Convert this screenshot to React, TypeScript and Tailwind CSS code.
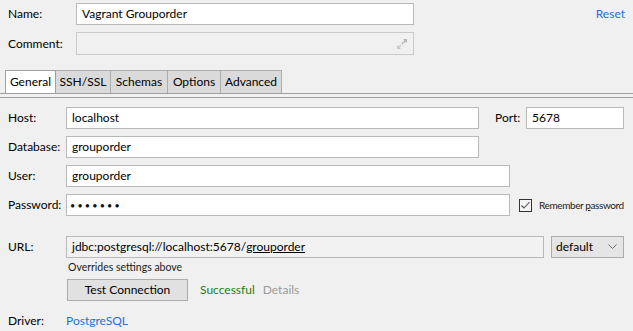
import React from "react";

const Field = ({ w, children, className = "" }: { w: string; children?: React.ReactNode; className?: string }) => (
  <div className={`${w} shrink-0 h-[22px] border border-[#b9b9b9] bg-white flex items-center px-[5px] text-[12px] text-black whitespace-nowrap ${className}`}>
    {children}
  </div>
);

export default function App() {
  return (
    <div
      className="w-[633px] h-[331px] bg-[#f0f0f0] overflow-hidden text-[12px] text-black leading-none whitespace-nowrap"
      style={{ fontFamily: 'Lato, "Noto Sans", sans-serif' }}
    >
      {/* Name */}
      <div className="flex items-center pt-[3px] pr-2">
        <div className="w-[76px] pl-2 shrink-0">Name:</div>
        <Field w="w-[338px]">Vagrant Grouporder</Field>
        <div className="flex-1" />
        <div className="text-[#2470d8]">Reset</div>
      </div>
      {/* Comment */}
      <div className="flex items-center mt-[7px]">
        <div className="w-[76px] pl-2 shrink-0">Comment:</div>
        <div className="w-[338px] shrink-0 h-[23px] border border-[#cacaca] bg-[#f0f0f0] flex items-center justify-end pr-[5px]">
          <svg width="12" height="12" viewBox="0 0 12 12">
            <path d="M7 1 H11 V5 Z" fill="#b4b4b4" />
            <path d="M6 6 L10 2" stroke="#b4b4b4" strokeWidth="1.4" />
            <path d="M1 7 V11 H5 Z" fill="#c8c8c8" />
            <path d="M2 10 L5 7" stroke="#c8c8c8" strokeWidth="1.4" />
          </svg>
        </div>
      </div>
      {/* Tabs */}
      <div className="mt-[15px] flex pl-[5px] border-b border-[#a0a0a0] h-[24px]">
        <div className="w-[51px] h-[23px] flex items-center justify-center bg-white border-l border-t border-r border-[#a0a0a0]">General</div>
        <div className="w-[55px] h-[23px] flex items-center justify-center bg-[#dadada] border-t border-r border-[#acacac]">SSH/SSL</div>
        <div className="w-[57px] h-[23px] flex items-center justify-center bg-[#dadada] border-t border-r border-[#acacac]">Schemas</div>
        <div className="w-[53px] h-[23px] flex items-center justify-center bg-[#dadada] border-t border-r border-[#acacac]">Options</div>
        <div className="w-[61px] h-[23px] flex items-center justify-center bg-[#dadada] border-t border-r border-[#acacac]">Advanced</div>
      </div>
      <div className="mt-[3px] border-t border-[#a0a0a0]" />

      {/* Form */}
      <div className="mt-[9px] flex flex-col gap-[7px]">
        <div className="flex items-center">
          <div className="w-[66px] pl-2 shrink-0">Host:</div>
          <Field w="w-[413px]">localhost</Field>
          <div className="ml-[16px] w-[31px] shrink-0">Port:</div>
          <Field w="w-[98px]">5678</Field>
        </div>
        <div className="flex items-center">
          <div className="w-[66px] pl-2 shrink-0">Database:</div>
          <Field w="w-[413px]">grouporder</Field>
        </div>
        <div className="flex items-center">
          <div className="w-[66px] pl-2 shrink-0">User:</div>
          <Field w="w-[444px]">grouporder</Field>
        </div>
        <div className="flex items-center">
          <div className="w-[66px] pl-2 shrink-0">Password:</div>
          <Field w="w-[444px]" className="pl-[3px]">
            <span className="text-[9px] tracking-[2.2px] text-[#111]">•••••••</span>
          </Field>
          <div className="ml-[9px] shrink-0 w-[13px] h-[13px] border border-[#333333] bg-[#f4f4f4] flex items-center justify-center">
            <svg width="11" height="11" viewBox="0 0 11 11">
              <path d="M1.5 5.5 L4 8 L9.5 2" fill="none" stroke="#505050" strokeWidth="1.1" />
            </svg>
          </div>
          <div className="ml-[7px] text-[10px] tracking-[-0.4px] text-[#1a1a1a]">
            Remember <span className="underline">p</span>assword
          </div>
        </div>
      </div>

      {/* URL */}
      <div className="mt-[20px] flex items-center">
        <div className="w-[66px] pl-2 shrink-0">URL:</div>
        <div className="w-[478px] shrink-0 h-[22px] border border-[#b9b9b9] bg-[#f2f2f2] flex items-center px-[5px]">
          jdbc:postgresql://localhost:5678/<span className="underline">grouporder</span>
        </div>
        <div className="ml-[7px] shrink-0 w-[73px] h-[22px] border border-[#acacac] bg-[#e5e5e5] flex items-center justify-between pl-[4px] pr-[6px]">
          <span>default</span>
          <svg width="9" height="6" viewBox="0 0 9 6">
            <path d="M0.5 0.5 L4.5 4.5 L8.5 0.5" fill="none" stroke="#707070" strokeWidth="1" />
          </svg>
        </div>
      </div>
      <div className="pl-[68px] mt-[4px] text-[10.5px] text-[#1a1a1a]">Overrides settings above</div>
      <div className="mt-[6px] flex items-center pl-[67px]">
        <div className="w-[121px] h-[22px] border border-[#adadad] bg-[#e1e1e1] flex items-center justify-center">Test Connection</div>
        <div className="ml-[12px] text-[#1e7a1e]">Successful</div>
        <div className="ml-[8px] text-[#9a9a9a]">Details</div>
      </div>
      <div className="mt-[14px] flex items-center">
        <div className="w-[66px] pl-2 shrink-0">Driver:</div>
        <div className="text-[#2470d8]">PostgreSQL</div>
      </div>
    </div>
  );
}
